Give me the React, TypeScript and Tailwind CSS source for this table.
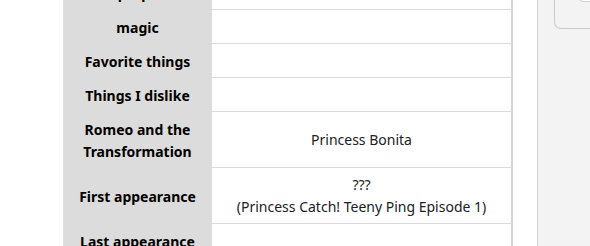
import React from 'react';

type Row = { label: string[]; value?: string[] };

const rows: Row[] = [
  { label: ['props'] },
  { label: ['magic'] },
  { label: ['Favorite things'] },
  { label: ['Things I dislike'] },
  { label: ['Romeo and the', 'Transformation'], value: ['Princess Bonita'] },
  { label: ['First appearance'], value: ['???', '(Princess Catch! Teeny Ping Episode 1)'] },
  { label: ['Last appearance'] },
];

function InfoRow({ row }: { row: Row }) {
  return (
    <>
      <div className="bg-[#dcdcdc] flex flex-col items-center justify-center pt-[7px] pb-[5px] font-bold text-black text-center">
        {row.label.map((line, i) => (
          <span key={i}>{line}</span>
        ))}
      </div>
      <div className="border-b border-[#dadada] flex flex-col items-center justify-center pt-[6px] pb-[5px] text-[#202122] text-center">
        {(row.value ?? []).map((line, i) => (
          <span key={i}>{line}</span>
        ))}
      </div>
    </>
  );
}

export default function App() {
  return (
    <div className="w-[590px] h-[246px] overflow-hidden bg-white flex" style={{ fontFamily: '"Noto Sans", sans-serif' }}>
      {/* infobox table */}
      <div className="ml-[63px] w-[450px] -mt-[24px] border-r-2 border-[#d6d6d6] self-start">
        <div className="grid grid-cols-[149px_299px] text-[14px] leading-[22px]">
          {rows.map((row, i) => (
            <InfoRow key={i} row={row} />
          ))}
        </div>
      </div>

      {/* side panel */}
      <div className="ml-[24px] flex-1 h-full bg-[#f3f3f3] border-l border-[#d4d4d4] pl-[16px]">
        <div className="-mt-[10px] h-[39px] border border-[#cbcbcb] rounded-bl-[7px] border-r-0 pl-[21px]">
          <div className="-mt-[10px] h-[21px] bg-white border border-[#d0d0d0] rounded-bl-[8px] border-r-0" />
        </div>
      </div>
    </div>
  );
}
